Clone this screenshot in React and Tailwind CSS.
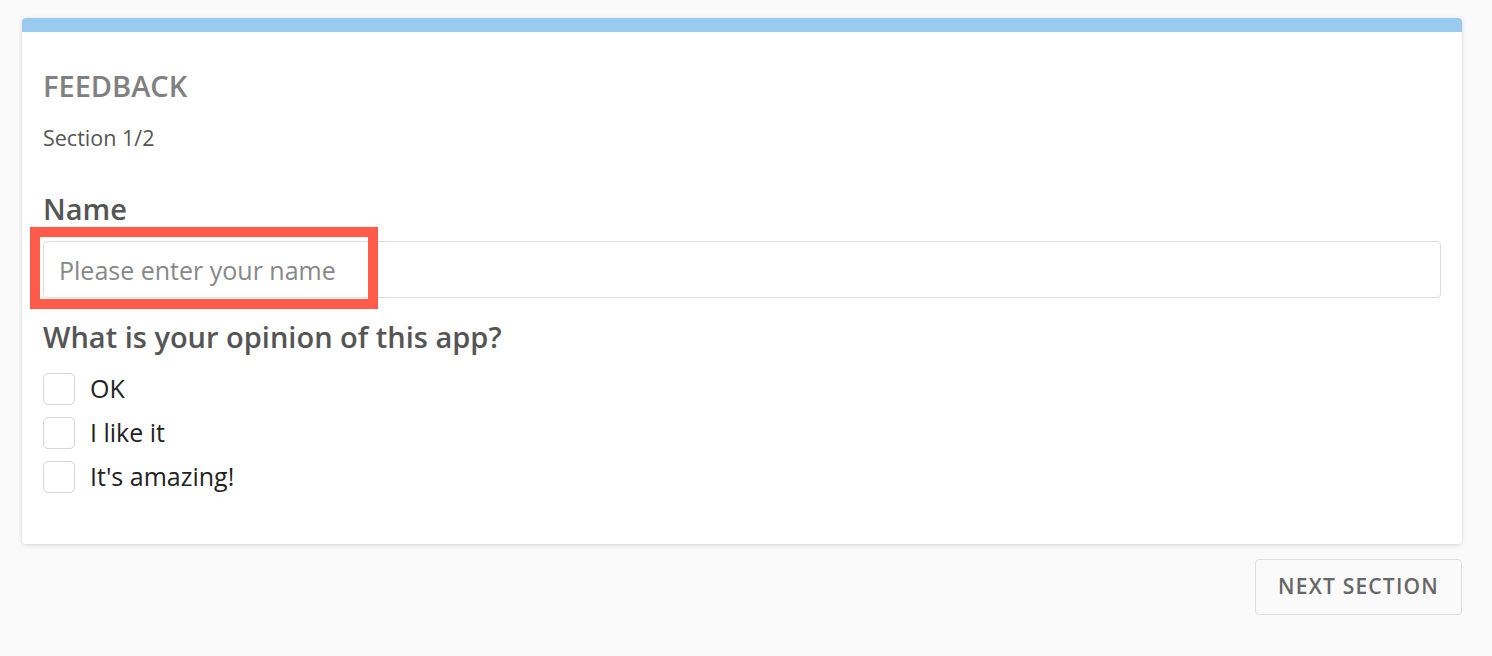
import React from "react";

const options = ["OK", "I like it", "It's amazing!"];

export default function App() {
  return (
    <div className="min-h-screen bg-[#fafafa] pl-[22px] pr-[30px] pt-[18px] pb-10 font-['Open_Sans',sans-serif]">
      {/* Carte du formulaire */}
      <div className="bg-white rounded-[4px] overflow-hidden shadow-[0_1px_4px_rgba(0,0,0,0.16)]">
        <div className="h-[14px] bg-[#99cbee]" />
        <div className="px-[21px] pb-[51px]">
          <h1 className="mt-[37px] text-[29px] leading-[34px] font-semibold text-[#808080]">FEEDBACK</h1>
          <p className="mt-[21px] text-[21.5px] leading-[28px] text-[#555]">Section 1/2</p>

          <label className="block mt-[40px] text-[29px] leading-[34px] font-semibold text-[#555]">Name</label>
          <div className="relative mt-[15px]">
            <input
              type="text"
              placeholder="Please enter your name"
              className="w-full h-[57px] rounded-[4px] border border-[#dcdcdc] px-[15px] text-[25px] text-[#333] placeholder:text-[#888] outline-none"
            />
            {/* Cadre d'annotation */}
            <div className="absolute left-[-13px] top-[-14px] w-[348px] h-[82px] border-[10px] border-[#fe5b4b] pointer-events-none" />
          </div>

          <p className="mt-[22px] text-[29px] leading-[34px] font-semibold text-[#555]">What is your opinion of this app?</p>
          <div className="mt-[19px] flex flex-col gap-[12px]">
            {options.map((o) => (
              <label key={o} className="flex items-center gap-[15px] h-[32px]">
                <span className="w-[32px] h-[32px] rounded-[5px] border border-[#d6d6d6] bg-white" />
                <span className="text-[25px] text-[#222]">{o}</span>
              </label>
            ))}
          </div>
        </div>
      </div>

      <div className="flex justify-end mt-[15px]">
        <button className="w-[207px] h-[56px] rounded-[4px] border border-[#dedede] bg-[#fafafa] text-[21px] font-semibold tracking-[1.2px] text-[#666]">
          NEXT SECTION
        </button>
      </div>
    </div>
  );
}
